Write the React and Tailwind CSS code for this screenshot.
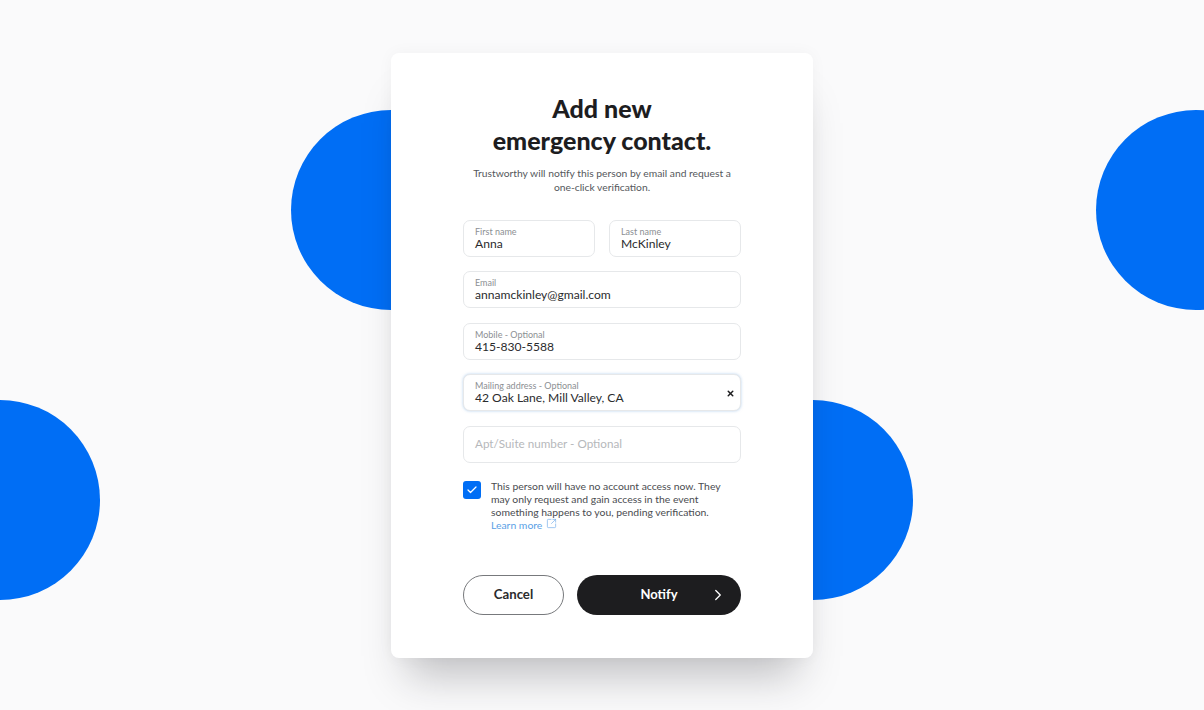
import { X, Check, ChevronRight, SquareArrowOutUpRight } from "lucide-react";

function Field({ label, value, className = "" }) {
  return (
    <div className={`h-[37px] flex-1 rounded-[7px] border border-[#e6e8ea] bg-white pl-[11px] pr-2 pt-[6px] ${className}`}>
      <div className="text-[9px] leading-[10px] text-[#8c8f93]">{label}</div>
      <div className="text-[12.1px] leading-[14px] text-[#2a2b2d]">{value}</div>
    </div>
  );
}

export default function App() {
  return (
    <div className="relative h-[710px] w-[1204px] overflow-hidden bg-[#fafafb] font-['Lato',sans-serif]">
      {/* Decorative circles */}
      <div className="absolute left-[291px] top-[110px] h-[200px] w-[200px] rounded-full bg-[#006ef5]" />
      <div className="absolute left-[1096px] top-[110px] h-[200px] w-[200px] rounded-full bg-[#006ef5]" />
      <div className="absolute left-[-100px] top-[400px] h-[200px] w-[200px] rounded-full bg-[#006ef5]" />
      <div className="absolute left-[713px] top-[400px] h-[200px] w-[200px] rounded-full bg-[#006ef5]" />

      {/* Card */}
      <div className="absolute left-[391px] top-[53px] h-[605px] w-[422px] rounded-[8px] bg-white px-[72px] pt-[39px] shadow-[0_34px_40px_-16px_rgba(30,32,40,0.26),0_0_16px_rgba(30,32,40,0.04)]">
        <h1 className="text-center text-[25px] font-black leading-[32px] text-[#1d1d1f]">
          Add new
          <br />
          emergency contact.
        </h1>
        <p className="mt-[11px] text-center text-[10.3px] leading-[13.5px] text-[#55585c]">
          Trustworthy will notify this person by email and request a
          <br />
          one-click verification.
        </p>

        <div className="mt-[25.5px] flex flex-col gap-[14.5px]">
          <div className="flex gap-[14px]">
            <Field label="First name" value="Anna" />
            <Field label="Last name" value="McKinley" />
          </div>
          <Field label="Email" value="annamckinley@gmail.com" className="flex-none" />
          <Field label="Mobile - Optional" value="415-830-5588" className="flex-none" />
          <div className="relative">
            <Field
              label="Mailing address - Optional"
              value="42 Oak Lane, Mill Valley, CA"
              className="flex-none border-[#d5e3ee] shadow-[0_0_3px_rgba(120,170,220,0.55)]"
            />
            <X className="absolute right-[6px] top-[15px] h-[9px] w-[9px] text-[#1d1d1f]" strokeWidth={4} />
          </div>
          <div className="flex h-[37px] items-center rounded-[7px] border border-[#e6e8ea] pl-[11px] text-[11.7px] text-[#b6b8bb]">
            Apt/Suite number - Optional
          </div>
        </div>

        <div className="mt-[17px] flex gap-[10px]">
          <div className="mt-[1px] flex h-[18px] w-[18px] shrink-0 items-center justify-center rounded-[3px] bg-[#006ef5]">
            <Check className="h-3 w-3 text-white" strokeWidth={2.5} />
          </div>
          <div className="text-[10.4px] leading-[13px] text-[#4a4c50]">
            This person will have no account access now. They
            <br />
            may only request and gain access in the event
            <br />
            something happens to you, pending verification.
            <div className="flex h-[13px] items-center gap-[4px] text-[#5a9fe6]">
              Learn more
              <SquareArrowOutUpRight className="mb-[4px] h-[11px] w-[11px]" strokeWidth={1.25} />
            </div>
          </div>
        </div>

        <div className="mt-[43px] flex gap-[13px]">
          <button className="h-10 w-[101px] rounded-full border border-[#77797c] bg-white text-[13.2px] font-bold text-[#2a2b2d]">
            Cancel
          </button>
          <button className="relative h-10 w-[164px] rounded-full bg-[#1d1d1f] text-[13px] font-bold text-white">
            Notify
            <ChevronRight className="absolute right-[14px] top-[11px] h-[18px] w-[18px]" strokeWidth={1.75} />
          </button>
        </div>
      </div>
    </div>
  );
}
